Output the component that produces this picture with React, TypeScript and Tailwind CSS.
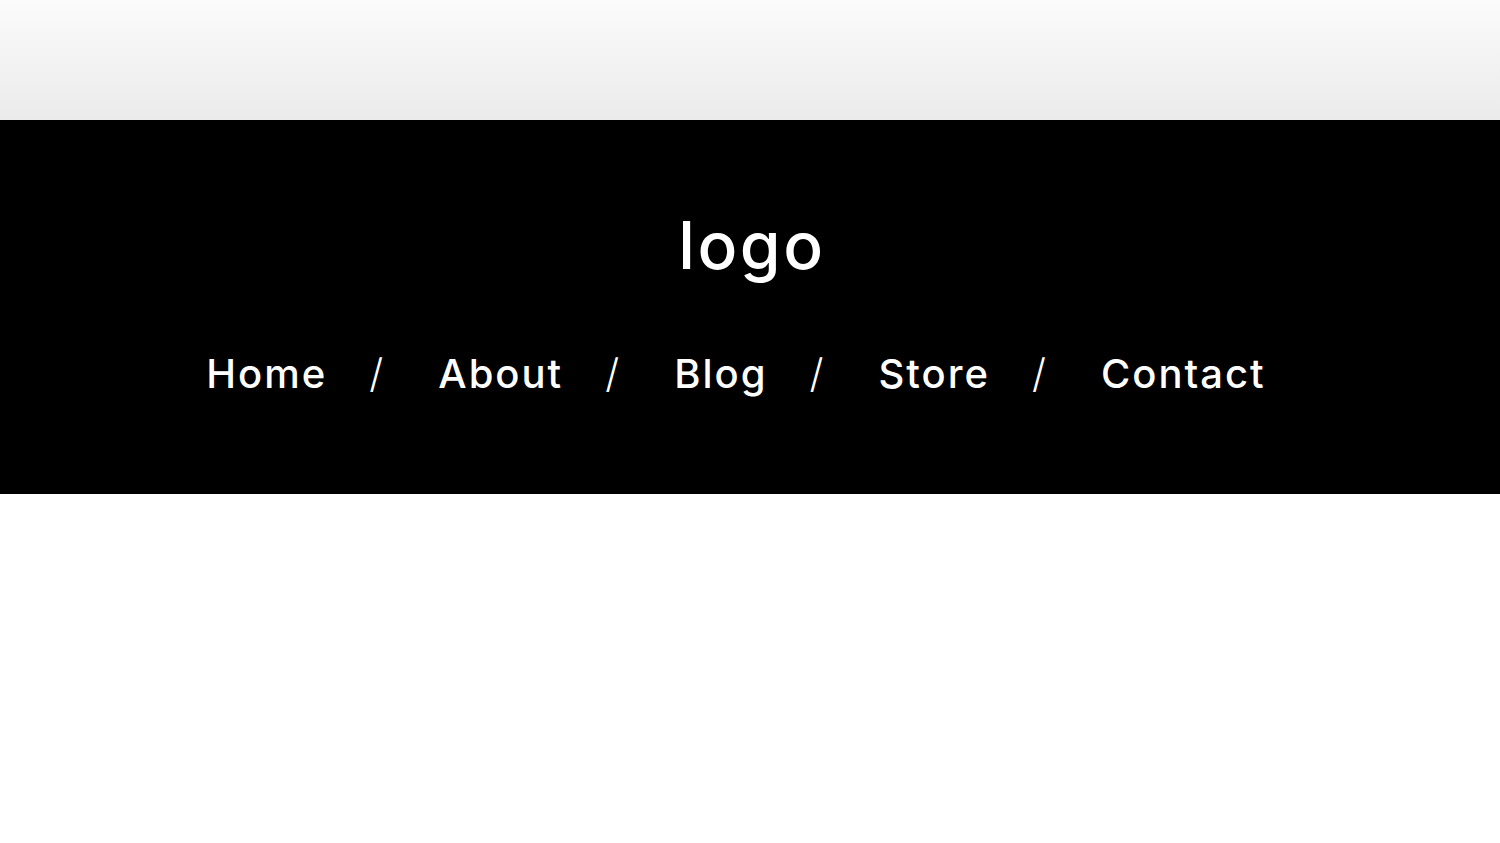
import React from "react";

const items = ["Home", "About", "Blog", "Store", "Contact"];

export default function App() {
  return (
    <div className="w-full min-h-[843px] bg-white" style={{ fontFamily: "Inter, 'Open Sans', sans-serif" }}>
      <div className="h-[120px] bg-gradient-to-b from-[#fbfbfb] to-[#ebebeb]" />
      <header className="h-[374px] bg-black flex flex-col items-center text-white">
        <div className="mt-[93px] h-[64px] pl-[4px] text-[66px] leading-[64px] font-medium tracking-[2.5px]">logo</div>
        <nav className="mt-[78px] flex items-center pr-[28px]">
          {items.map((it, i) => (
            <React.Fragment key={it}>
              <a className="text-[40px] leading-[38px] font-medium tracking-[2px]">{it}</a>
              {i < items.length - 1 && (
                <span className="ml-[42px] mr-[55px] w-[14px] flex justify-center text-[40px] leading-[38px] font-light">/</span>
              )}
            </React.Fragment>
          ))}
        </nav>
      </header>
    </div>
  );
}
